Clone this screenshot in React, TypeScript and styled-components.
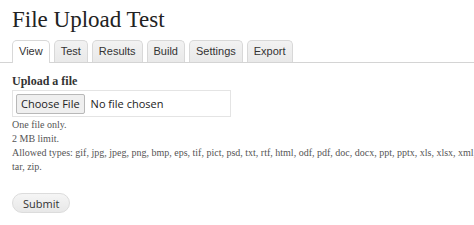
import React from "react";
import styled, { createGlobalStyle } from "styled-components";

const GlobalStyle = createGlobalStyle`
    html, body {
        margin: 0;
        padding: 0;
        background: #fff;
        overflow: hidden;
    }
`;

const tabs = ["View", "Test", "Results", "Build", "Settings", "Export"];

function App() {
    return (
        <Page>
            <GlobalStyle />
            <Title>File Upload Test</Title>
            <Tabs>
                {tabs.map((t, i) => (
                    <Tab key={t} active={i === 0}>
                        {t}
                    </Tab>
                ))}
            </Tabs>
            <Form>
                <Label>Upload a file</Label>
                <FileBox>
                    <ChooseButton type="button">Choose File</ChooseButton>
                    <FileName>No file chosen</FileName>
                </FileBox>
                <Description>
                    <p>One file only.</p>
                    <p>2 MB limit.</p>
                    <p>
                        Allowed types: gif, jpg, jpeg, png, bmp, eps, tif, pict,
                        psd, txt, rtf, html, odf, pdf, doc, docx, ppt, pptx,
                        xls, xlsx, xml, avi, mov, mp3, mp4, ogg, wav, bz2, gz,
                        tar, zip.
                    </p>
                </Description>
                <Submit type="button">Submit</Submit>
            </Form>
        </Page>
    );
}

const Page = styled.div`
    width: 474px;
    font-family: "Liberation Serif", serif;
    color: #333;
`;

const Title = styled.h1`
    margin: 0;
    padding: 6px 12px 0;
    font-size: 23px;
    line-height: 28px;
    font-weight: normal;
    color: #222;
`;

const Tabs = styled.ul`
    display: flex;
    align-items: flex-end;
    gap: 4px;
    margin: 6px 0 0;
    padding: 0 0 0 12px;
    list-style: none;
    border-bottom: 1px solid #d4d4d4;
`;

const Tab = styled.li<{ active?: boolean }>`
    padding: 0 6px;
    line-height: 20px;
    font-family: "Liberation Sans", Arial, sans-serif;
    font-size: 11px;
    color: #333;
    border: 1px solid #d8d8d8;
    border-bottom: none;
    border-radius: 5px 5px 0 0;
    background: ${(p) => (p.active ? "#fff" : "linear-gradient(#f2f2f2, #e9e9e9)")};
    margin-bottom: ${(p) => (p.active ? "-1px" : "0")};
    height: ${(p) => (p.active ? "22px" : "21px")};
`;

const Form = styled.div`
    padding: 10px 12px 0;
    width: 636px;
`;

const Label = styled.div`
    font-weight: bold;
    font-size: 12px;
    line-height: 16px;
    color: #333;
`;

const FileBox = styled.div`
    display: flex;
    align-items: center;
    gap: 6px;
    width: 211px;
    height: 25px;
    margin-top: 1px;
    padding: 0 3px;
    border: 1px solid #e4e4e4;
`;

const ChooseButton = styled.button`
    height: 20px;
    padding: 0 4px;
    font-family: "Open Sans", sans-serif;
    font-size: 11px;
    color: #222;
    background: #efefef;
    border: 1px solid #b8b8b8;
    border-radius: 2px;
`;

const FileName = styled.span`
    font-family: "Open Sans", sans-serif;
    font-size: 11px;
    color: #222;
`;

const Description = styled.div`
    margin-top: 1px;
    font-size: 10px;
    line-height: 14px;
    color: #555;

    p {
        margin: 0;
    }
`;

const Submit = styled.button`
    margin-top: 19px;
    height: 20px;
    padding: 0 10px;
    font-family: "Open Sans", sans-serif;
    font-size: 11px;
    color: #333;
    background: linear-gradient(#f5f5f5, #e8e8e8);
    border: 1px solid #dcdcdc;
    border-radius: 12px;
`;

export default App;
